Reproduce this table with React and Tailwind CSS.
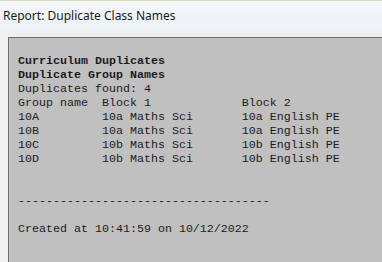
export default function App() {
  const lines = [
    { t: "", b: false },
    { t: "Curriculum Duplicates", b: true },
    { t: "Duplicate Group Names", b: true },
    { t: "Duplicates found: 4" },
    { t: "Group name  Block 1             Block 2" },
    { t: "10A         10a Maths Sci       10a English PE" },
    { t: "10B         10a Maths Sci       10a English PE" },
    { t: "10C         10b Maths Sci       10b English PE" },
    { t: "10D         10b Maths Sci       10b English PE" },
    { t: "" },
    { t: "" },
    { t: "------------------------------------" },
    { t: "" },
    { t: "Created at 10:41:59 on 10/12/2022" },
  ];

  return (
    <div className="w-[382px] h-[262px] overflow-hidden bg-[#f0f0f0] flex flex-col">
      {/* Title bar */}
      <div className="h-[30px] shrink-0 bg-gradient-to-b from-[#f4f7fb] to-[#edf2f7] border-t border-[#d9d3a8] flex items-center pl-[3px]">
        <span className="text-[12px] text-[#1a1a1a]" style={{ fontFamily: '"Segoe UI", "Noto Sans", "Open Sans", sans-serif' }}>
          Report: Duplicate Class Names
        </span>
      </div>

      {/* Report panel */}
      <div className="flex-1 pt-[7px] pl-[8px]">
        <div className="h-[260px] w-[400px] bg-[#c0c0c0] border border-[#6e6e6e] border-r-0 border-b-0 pl-[9px] pt-[2px]">
          <pre className="text-[11.67px] leading-[14px] text-[#1c1c1c] m-0" style={{ fontFamily: '"Liberation Mono", "Courier New", monospace' }}>
            {lines.map((l, i) => (
              <div key={i} className={l.b ? "font-bold" : ""}>
                {l.t || "\u00a0"}
              </div>
            ))}
          </pre>
        </div>
      </div>
    </div>
  );
}
